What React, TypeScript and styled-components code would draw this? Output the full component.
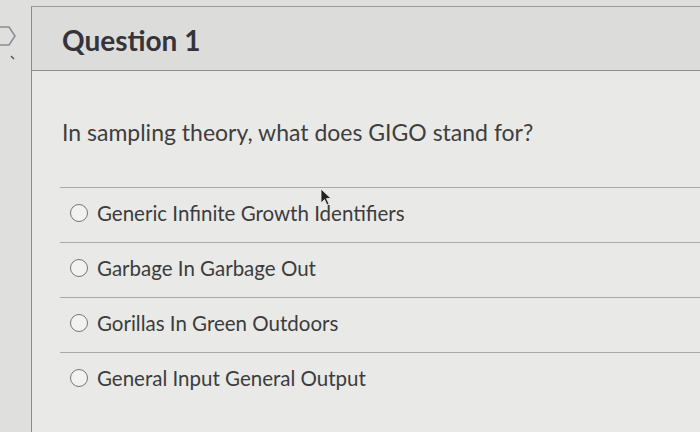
import React from "react";
import styled, { createGlobalStyle } from "styled-components";

const Global = createGlobalStyle`
  html, body {
    margin: 0;
    padding: 0;
    background: #dedede;
    font-family: Lato, "Open Sans", sans-serif;
    color: #3a3a3c;
  }
`;

const Page = styled.div`
  display: flex;
  width: 700px;
  height: 432px;
  overflow: hidden;
  padding-top: 6px;
  box-sizing: border-box;
  background: #dfdfde;
`;

const Gutter = styled.div`
  width: 31px;
  flex-shrink: 0;
  position: relative;
  padding-top: 19px;
  svg {
    display: block;
  }
`;

const Card = styled.div`
  flex: 1;
  border-left: 1.5px solid #8d8d8d;
  border-top: 1.5px solid #9a9a9a;
  background: #e9e9e7;
  position: relative;
`;

const Header = styled.div`
  height: 63px;
  background: #dcdcda;
  border-bottom: 1.5px solid #8e8e8e;
  display: flex;
  align-items: center;
  padding-left: 30px;
`;

const Title = styled.h2`
  margin: 0;
  margin-top: 2px;
  font-size: 28px;
  font-weight: 700;
  color: #34343a;
`;

const Body = styled.div`
  padding: 46px 0 0 30px;
`;

const Prompt = styled.p`
  margin: 0 0 40px;
  font-size: 23px;
  line-height: 30px;
  color: #3e3e40;
`;

const Options = styled.div`
  margin-left: -2px;
`;

const Option = styled.label`
  display: flex;
  align-items: center;
  gap: 9px;
  height: 55px;
  box-sizing: border-box;
  padding: 0 0 4px 10px;
  border-top: 1.5px solid #a9a9a7;
  font-size: 20.5px;
  color: #3c3c3e;
`;

const Radio = styled.span`
  width: 16px;
  height: 16px;
  border: 1.7px solid #76767a;
  border-radius: 50%;
  background: #f2f2f0;
  flex-shrink: 0;
`;

const Cursor = styled.svg`
  position: absolute;
  left: 288px;
  top: 181px;
`;

const options = [
  "Generic Infinite Growth Identifiers",
  "Garbage In Garbage Out",
  "Gorillas In Green Outdoors",
  "General Input General Output",
];

export default function App() {
  return (
    <Page>
      <Global />
      <Gutter>
        <svg width="18" height="22" viewBox="0 0 18 22">
          <path d="M-4 2 H9 L15 11 L9 20 H-4" fill="none" stroke="#8a8e96" strokeWidth="1.6" />
        </svg>
        <svg width="10" height="8" viewBox="0 0 10 8" style={{ marginLeft: 10, marginTop: 8 }}>
          <path d="M1 1 L4 4" stroke="#555" strokeWidth="1.4" />
        </svg>
      </Gutter>
      <Card>
        <Header>
          <Title>Question 1</Title>
        </Header>
        <Body>
          <Prompt>In sampling theory, what does GIGO stand for?</Prompt>
          <Options>
            {options.map((o) => (
              <Option key={o}>
                <Radio />
                {o}
              </Option>
            ))}
          </Options>
        </Body>
        <Cursor width="14" height="20" viewBox="0 0 14 20">
          <path d="M1 1 L1 15 L4.5 11.5 L7 17 L9 16 L6.5 10.5 L11 10.5 Z" fill="#222" stroke="#eee" strokeWidth="0.8" />
        </Cursor>
      </Card>
    </Page>
  );
}
